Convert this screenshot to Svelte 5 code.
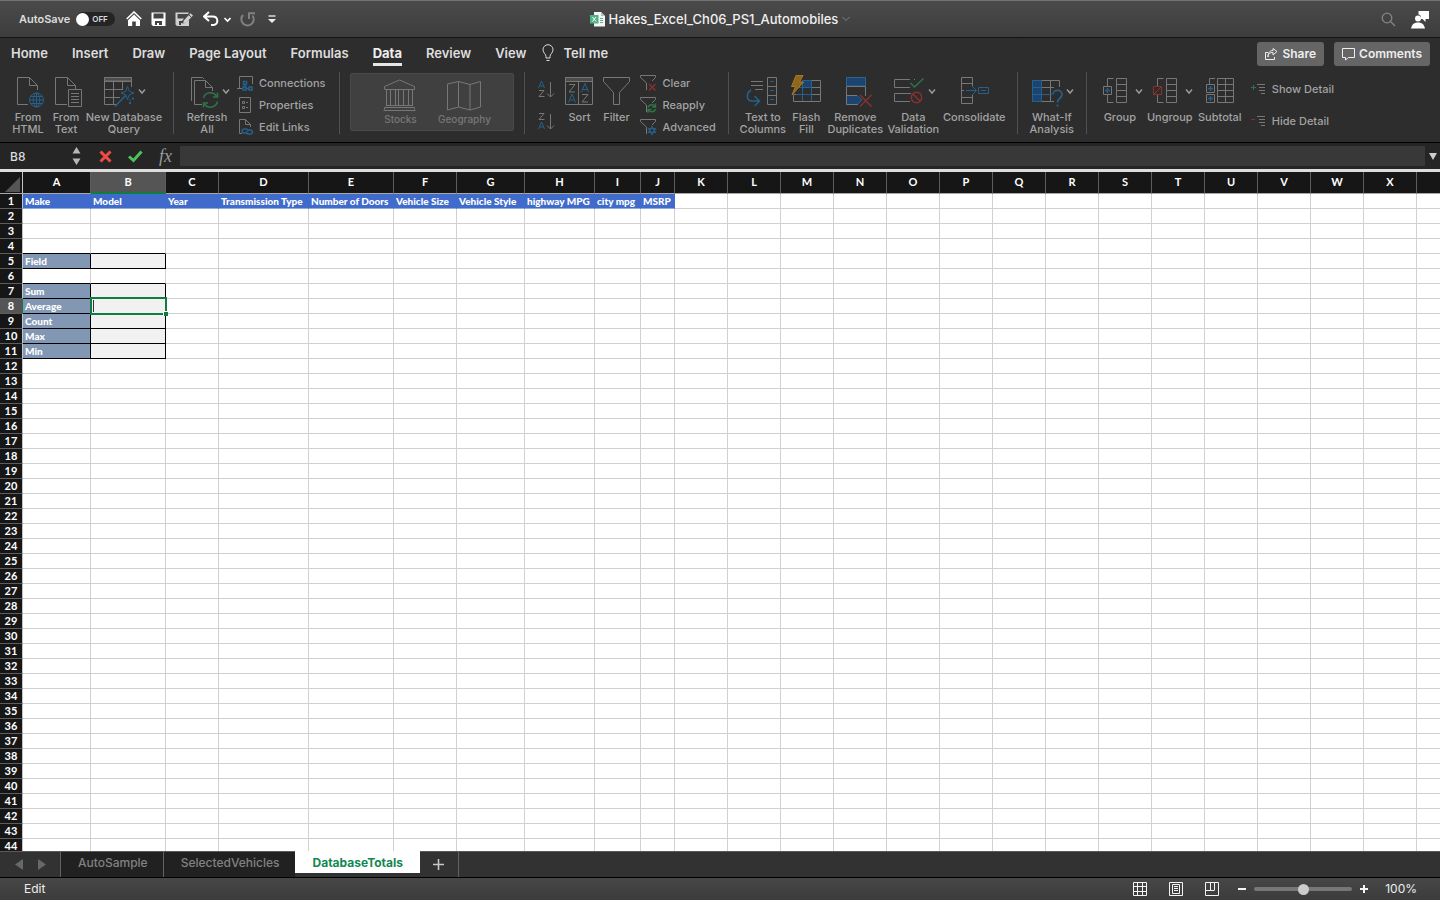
<script>
  const menu = ['Home', 'Insert', 'Draw', 'Page Layout', 'Formulas', 'Data', 'Review', 'View'];

  const columns = [
    ['A', 68], ['B', 75], ['C', 53], ['D', 90], ['E', 85], ['F', 63], ['G', 68], ['H', 70], ['I', 46], ['J', 34],
    ...'KLMNOPQRSTUVWX'.split('').map((c) => [c, 53]),
    ['', 53]
  ];
  const headings = ['Make', 'Model', 'Year', 'Transmission Type', 'Number of Doors', 'Vehicle Size', 'Vehicle Style', 'highway MPG', 'city mpg', 'MSRP'];
  const labels = { 5: 'Field', 7: 'Sum', 8: 'Average', 9: 'Count', 10: 'Max', 11: 'Min' };
  const rows = Array.from({ length: 44 }, (_, i) => i + 1);

  function text(row, col) {
    if (row === 1) return headings[col] ?? '';
    return col === 0 ? (labels[row] ?? '') : '';
  }
  function kind(row, col) {
    if (row === 1 && col < 10) return 'head';
    if (col > 1) return '';
    const line = row === 4 || row === 6 ? 'line' : '';
    if (!labels[row]) return line;
    return col === 0 ? 'label' : 'value';
  }
</script>

{#snippet tool(name, label, x, width)}
  <button class="tool" style:width="{width}px">
    <svg {width} height="39" viewBox="{x} 72 {width} 39" aria-hidden="true">
      {#if name === 'html'}
        <path d="M28 104.5H17.5V77.5H29.5L37.5 85.5V90M29.5 77.5V85.5H37.5" />
        <g class="blue"><circle cx="36.5" cy="100" r="7" /><ellipse cx="36.5" cy="100" rx="3.3" ry="7" /><path d="M36.5 93V107M29.5 100H43.5M31 96.5H42M31 103.5H42" /></g>
      {:else if name === 'text'}
        <path d="M67 104.5H55.5V77.5H67.5L75.5 85.5V89M67.5 77.5V85.5H75.5" />
        <path d="M68.5 89.5H81.5V106.5H68.5ZM71 93.5H79M71 96.5H79M71 99.5H79M71 102.5H79" />
      {:else if name === 'query'}
        <path class="band" d="M104.5 77.5H131.5V81H104.5Z" />
        <path d="M117 104.5H104.5V77.5H131.5V87M104.5 81.5H131.5M104.5 89.5H123M104.5 97.5H120M113.5 81.5V104.5M122.5 81.5V90" />
        <g class="blue"><path stroke-width="1.5" d="M115 106.5L125.5 95.5" /><path d="M127.5 86.5L129.3 91.3L134 93L129.3 94.8L127.5 99.5L125.8 94.8L121 93L125.8 91.3Z" /><path stroke-width="2" d="M132 98.500H134M129 103H131M130 99.500V100.500" /></g>
        <path class="chev" d="M139 89.500L142 93L145 89.500" />
      {:else if name === 'refresh'}
        <path d="M191.500 101V77.500H202.500L204 79M202 104.500H194.500V80.500H205.500L212.500 87.500V91M205.500 80.500V87.500H212.500" />
        <g class="green" stroke-width="1.500"><path d="M203.500 98A7.200 7.200 0 0 1 216.500 96M217.500 101.500A7.200 7.200 0 0 1 204.500 104" /><path d="M217.500 92.500V97H213M203.500 107.500V103H208" /></g>
        <path class="chev" d="M223 89.500L226 93L229 89.500" />
      {:else if name === 'sort'}
        <path class="band" d="M565.500 77.500H592.500V81.500H565.500Z" /><path d="M565.500 77.500H592.500V104.500H565.500ZM565.500 81.500H592.500M578.500 81.500V104.500" />
        <path d="M569 84.500H575L569 92H575M582 94.500H588L582 102H588" />
        <path class="blue" d="M568.500 102.500L572 94L575.500 102.500M569.500 100H574.500M581.500 92L585 83.500L588.500 92M582.500 89.500H587.500" />
      {:else if name === 'filter'}
        <path d="M603.500 77.500H629.500V81.500L619.500 92.500V104.500H613.500V92.500L603.500 81.500Z" />
      {:else if name === 'columns'}
        <path d="M751 81.500H763M751 85.500H763M755 89.500H763M767.500 77.500H776.500V104.500H767.500ZM767.500 86.500H776.500M767.500 95.500H776.500" />
        <path class="blue" d="M770 81.500H774M770 90.500H774M770 99.500H774" />
        <path class="blue" stroke-width="1.500" d="M751 90C746 93 746 101 752 101H759M754.500 96L759.500 101L754.500 106" />
      {:else if name === 'flash'}
        <path class="bluefill" d="M802.500 80.500H811.500V87.500H802.500Z" />
        <path d="M793.500 95V101.500H820.500V80.500H804M802.500 87.500H820.500M793.500 94.500H820.500M811.500 80.500V101.500" /><path class="blue" d="M802.500 101V80.500H811.500V101M796 87.500H812M796 94.500H812" />
        <path class="bolt" d="M796 75.500H803L799.500 82H803.500L792 95L795.500 86.500H791.500Z" />
      {:else if name === 'remove'}
        <path class="bluefill" d="M846.500 77.500H865.500V86H846.500ZM846.500 95.500H857L862 100L857 104.500H846.500Z" />
        <path d="M865.500 96V86.500H846.500V104.500H858M846.500 95.500H857" />
        <path class="red" stroke-width="1.500" d="M860 95L871.500 106.500M871.500 95L860 106.500" />
      {:else if name === 'validate'}
        <path d="M910 79.500H894.500V87.500H910M914 79.500H915M911 93.500H894.500V101.500H910" />
        <path class="green" stroke-width="1.500" d="M910.500 83L914.500 87L923.500 78.500" />
        <g class="red" stroke-width="1.500"><circle cx="916.500" cy="97.500" r="5.200" /><path d="M913 94L920 101" /></g>
        <path class="chev" d="M929 89.500L932 93L935 89.500" />
      {:else if name === 'consolidate'}
        <path d="M972.500 84V77.500H961.500V103.500H972.500V97.500H961.500M961.500 83.500H972.500M961.500 90.500H964M972.500 84V87M972.500 94V98" />
        <path class="blue" d="M966 90.500H976M972 86L976.500 90.500L972 95M978.500 87.500H988.500V93.500H978.500ZM981 90.500H986" />
      {:else if name === 'whatif'}
        <path class="bluefill" d="M1032.500 80.500H1041.500V101.500H1032.500Z" />
        <path d="M1041.500 80.500H1059.500V87M1041.500 87.500H1054M1041.500 94.500H1052M1041.500 101.500H1054M1050.500 80.500V101.500" /><path class="blue" d="M1032.500 80.500H1041.500V101.500H1032.500ZM1032.500 87.500H1041.500M1032.500 94.500H1052" />
        <path class="blue" stroke-width="1.700" d="M1053 94.500C1053 89 1062 89 1062 94.500C1062 98.500 1057.500 98 1057.500 102.500M1057.500 104.500V106.500" />
        <path class="chev" d="M1067 89.500L1070 93L1073 89.500" />
      {:else if name === 'group'}
        <path d="M1113.500 78.500H1107.500V86M1107.500 95V102.500H1113.500M1103.500 86.500H1111.500V94.500H1103.500ZM1116.500 78.500H1126.500V102.500H1116.500ZM1116.500 84.500H1126.500M1116.500 90.500H1126.500M1116.500 96.500H1126.500" />
        <path class="blue" stroke-width="1.500" d="M1105 90.500H1110M1107.500 88V93" />
        <path class="chev" d="M1136 89.500L1139 93L1142 89.500" />
      {:else if name === 'ungroup'}
        <path d="M1163.500 78.500H1157.500V86M1157.500 95V102.500H1163.500M1166.500 78.500H1176.500V102.500H1166.500ZM1166.500 84.500H1176.500M1166.500 90.500H1176.500M1166.500 96.500H1176.500" />
        <path class="red" d="M1153.500 86.500H1161.500V94.500H1153.500ZM1153.500 94.500L1161.500 86.500" />
        <path class="chev" d="M1186 89.500L1189 93L1192 89.500" />
      {:else if name === 'subtotal'}
        <path d="M1215 78.500H1209.500V84M1206.500 84.500H1214.500V92.500H1206.500ZM1206.500 94.500H1214.500V102.500H1206.500ZM1217.500 78.500H1233.500V102.500H1217.500ZM1217.500 84.500H1233.500M1217.500 90.500H1233.500M1217.500 96.500H1233.500M1225.500 78.500V102.500" />
        <path class="blue" stroke-width="1.500" d="M1208 88.500H1213M1210.500 86V91M1208 98.500H1213M1210.500 96V101" />
      {/if}
    </svg>
    {#each label as line}<span>{line}</span>{/each}
  </button>
{/snippet}

{#snippet small(name, label)}
  <button class="small">
    <svg width="17" height="16" viewBox="0 0 17 16" aria-hidden="true">
      {#if name === 'connections'}
        <path d="M0 13.500H5M2.500 13V1.500H15.500V9" /><path class="blue" stroke-width="1.500" d="M6.500 6.500H9.500V9.500H6.500ZM6 12H9V15H6ZM12 12H15V15H12ZM8 9.500V12M9 13.500H12" />
      {:else if name === 'properties'}
        <path d="M2.500 .500H13.500V15.500H2.500ZM5.500 4.500H7.500V6.500H5.500ZM5.500 9.500H7.500V11.500H5.500ZM9 5.500H11M9 10.500H11" />
      {:else if name === 'links'}
        <path d="M5 14.500H2.500V.500H8.500L13.500 5.500V8M8.500 .500V5.500H13.500" /><path class="blue" stroke-width="1.500" d="M9 14H7C4.500 14 4.500 10 7 10H9.500C11 10 11.500 12 10.500 12.500M11 11H13.500C16 11 16 15 13.500 15H11C9.500 15 9 13 10 12.500" />
      {:else if name === 'show' || name === 'hide'}
        <path d="M7 3.500H15M9 6.500H15M9 9.500H15M11 12.500H15" />
        {#if name === 'show'}<path class="green" d="M1 6.500H6M3.500 4V9" />{:else}<path class="red" d="M1 6.500H5" />{/if}
      {:else}
        <path d="M6.500 15L6.500 8L.500 2.500V.500H15.500V2.500L12 6" />
        {#if name === 'clear'}<path class="red" stroke-width="1.400" d="M9 9L15.500 15.500M15.500 9L9 15.500" />
        {:else if name === 'reapply'}<path class="green" stroke-width="1.400" d="M8 10.500C9 7 13.500 7 15 9.500M15.500 6.500V10H12M15.500 12C14.500 15.500 10 15.500 8.500 13M8 16V12.500H11.500" />
        {:else}<g class="blue" stroke-width="1.500"><circle cx="12" cy="11.500" r="2.200" /><path d="M12 7V9.500M12 13.500V16M8 9.500L10 10.500M14 12.500L16 13.500M8 13.500L10 12.500M14 10.500L16 9.500" /></g>{/if}
      {/if}
    </svg>
    {label}
  </button>
{/snippet}

{#snippet order(down)}
  <button class="order" aria-label={down ? 'Sort descending' : 'Sort ascending'}>
    <svg width="20" height="18" viewBox="0 0 20 18" aria-hidden="true">
      <path class="blue" d={down ? 'M2.500 17L5.500 10L8.500 17M3.500 15H7.500' : 'M2.500 8L5.500 1L8.500 8M3.500 6H7.500'} />
      <path d={down ? 'M3 1.500H8L3 7.500H8.500' : 'M3 10.500H8L3 16.500H8.500'} />
      <path d="M14.500 2V17M11 13.500L14.500 17L18 13.500" />
    </svg>
  </button>
{/snippet}

<main>
  <header class="title">
    <div class="quick">
      <label class="auto">AutoSave <input type="checkbox" role="switch" /><span class="switch">OFF</span></label>
      <button aria-label="Start">
        <svg width="16" height="16" viewBox="0 0 16 16"><path d="M.700 8L8 1L15.300 8" fill="none" stroke="#fff" stroke-width="1.600" /><path fill="#fff" d="M2 9.200L8 3.600L14 9.200V15H9.800V10.500H6.200V15H2Z" /></svg>
      </button>
      <button aria-label="Save">
        <svg width="15" height="16" viewBox="0 0 15 16"><path fill="#fff" fill-rule="evenodd" d="M.500 1.500H14.500V15H2L.500 13.500ZM2.500 2.500V7.500H12.500V2.500ZM4 10V14H6V12H8V14H11V10Z" /></svg>
      </button>
      <button aria-label="Save as">
        <svg width="19" height="16" viewBox="0 0 19 16"><path fill="#d0d0d0" fill-rule="evenodd" d="M.500 1.500H14L13 3H2.500V7.500H9L7 10H4V14H6V12L9 12.500L14 9V15H2L.500 13.500Z" /><path fill="#d0d0d0" d="M8 12.500L9 9.200L15.500 2.200L18 4.500L11.500 11.500Z" /><path stroke="#444" d="M14 4L16.500 6.300" /></svg>
      </button>
      <button aria-label="Undo">
        <svg width="28" height="16" viewBox="0 0 28 16" fill="none" stroke="#fff" stroke-width="2"><path d="M6 1L1 5.500L6 10M1.500 5.500H9.500C16 5.500 15.500 14 10.500 14H8" /><path stroke-width="1.600" d="M21.500 7L24.500 10L27.500 7" /></svg>
      </button>
      <button aria-label="Redo">
        <svg width="16" height="16" viewBox="0 0 16 16" fill="none" stroke="#808080" stroke-width="2"><path d="M3 4A6.200 6.200 0 1 0 12.500 4.500M9 8V2.200H15" /></svg>
      </button>
      <button class="more" aria-label="Customize toolbar">
        <svg width="8" height="16" viewBox="0 0 8 16"><path d="M.500 5H7.500" stroke="#ddd" stroke-width="1.500" /><path fill="#eee" d="M0 8H8L4 12Z" /></svg>
      </button>
    </div>
    <h1>
      <svg width="15" height="15" viewBox="0 0 15 15"><path fill="#f4f4f4" d="M4 0H11L15 4V14.500H4Z" /><path fill="#bbb" d="M11 0V4H15Z" /><path stroke="#58b58a" d="M10 6.500H13M10 8.500H13M10 10.500H13" /><path fill="#4fb384" d="M0 3H8.500V11.500H0Z" /><path stroke="#fff" d="M2.500 5L6 9.500M6 5L2.500 9.500" /></svg>
      Hakes_Excel_Ch06_PS1_Automobiles
      <svg width="8" height="6" viewBox="0 0 8 6"><path d="M.500 1L4 4.500L7.500 1" fill="none" stroke="#808080" /></svg>
    </h1>
    <div class="right">
      <button aria-label="Search"><svg width="15" height="15" viewBox="0 0 15 15" fill="none" stroke="#858585" stroke-width="1.300"><circle cx="6" cy="6" r="4.800" /><path d="M9.500 9.500L14 14" /></svg></button>
      <button aria-label="Account"><svg width="19" height="19" viewBox="0 0 19 19" fill="#fff"><path d="M7.500 1H18V9H14.500V12L11.500 9H10C10.500 6 9 4.500 7.500 4.500Z" /><circle cx="7" cy="8.500" r="3" /><path d="M0 18.500C1 14 3.500 12.500 7 12.500C10.500 12.500 13 14 14 18.500Z" /></svg></button>
    </div>
  </header>

  <nav class="menu">
    {#each menu as item}<button class:active={item === 'Data'}>{item}</button>{/each}
    <button class="tell"><svg width="12" height="18" viewBox="0 0 12 18" fill="none" stroke="#ddd"><path d="M4 12.500C4 10 1 9 1 5.700A5 5 0 0 1 11 5.700C11 9 8 10 8 12.500V14H4ZM4.500 16.500H7.500" /></svg>Tell me</button>
    <div class="actions">
      <button class="pill"><svg width="13" height="12" viewBox="0 0 13 12" fill="none" stroke="#eee"><path d="M3 4.500H.500V11.500H9.500V9M3 9C3 5.500 5 4.500 8 4.500V7L12 3.500L8 .500V2.500C4.500 2.500 3 5 3 9Z" /></svg>Share</button>
      <button class="pill"><svg width="13" height="13" viewBox="0 0 13 13" fill="none" stroke="#eee"><path d="M.500 .500H12.500V9.500H6.500L3.500 12V9.500H.500Z" /></svg>Comments</button>
    </div>
  </nav>

  <section class="ribbon">
    <div class="group first">
      {@render tool('html', ['From', 'HTML'], 9, 38)}
      {@render tool('text', ['From', 'Text'], 47, 38)}
      {@render tool('query', ['New Database', 'Query'], 85, 78)}
    </div>
    <div class="group">
      {@render tool('refresh', ['Refresh', 'All'], 184, 46)}
      <div class="list">
        {@render small('connections', 'Connections')}
        {@render small('properties', 'Properties')}
        {@render small('links', 'Edit Links')}
      </div>
    </div>
    <div class="group types">
      <div class="gallery">
        <button><svg width="34" height="34" viewBox="383 77 34 34"><path d="M384.500 88V85.500L399.500 79L414.500 85.500V88.500H384.500M386.500 89V104M390.500 89V104M395.500 89V104M398.500 89V104M403.500 89V104M408.500 89V104M412.500 89V104M386 104.500H413M384.500 108.500V106.500H414.500V108.500M383.500 109.500H415.500" /></svg>Stocks</button>
        <button><svg width="34" height="34" viewBox="447 77 34 34"><path d="M447.500 83L458.500 80.500L470 83.500L480.500 80.500V106L470 109L458.500 106L447.500 109ZM458.500 80.500V106M470 83.500V109" /></svg>Geography</button>
      </div>
    </div>
    <div class="group filters">
      <div class="orders">{@render order(false)}{@render order(true)}</div>
      {@render tool('sort', ['Sort'], 560, 38)}
      {@render tool('filter', ['Filter'], 598, 36)}
      <div class="list">
        {@render small('clear', 'Clear')}
        {@render small('reapply', 'Reapply')}
        {@render small('advanced', 'Advanced')}
      </div>
    </div>
    <div class="group">
      {@render tool('columns', ['Text to', 'Columns'], 739, 48)}
      {@render tool('flash', ['Flash', 'Fill'], 787, 39)}
      {@render tool('remove', ['Remove', 'Duplicates'], 826, 59)}
      {@render tool('validate', ['Data', 'Validation'], 885, 57)}
      {@render tool('consolidate', ['Consolidate'], 942, 65)}
    </div>
    <div class="group">
      {@render tool('whatif', ['What-If', 'Analysis'], 1028, 48)}
    </div>
    <div class="group last">
      {@render tool('group', ['Group'], 1097, 46)}
      {@render tool('ungroup', ['Ungroup'], 1143, 54)}
      {@render tool('subtotal', ['Subtotal'], 1197, 46)}
      <div class="list detail">
        {@render small('show', 'Show Detail')}
        {@render small('hide', 'Hide Detail')}
      </div>
    </div>
  </section>

  <section class="formula">
    <input class="name" aria-label="Name box" value="B8" />
    <svg class="step" width="9" height="20" viewBox="0 0 9 20" fill="#b8b8b8"><path d="M.500 7.500L4.500 1L8.500 7.500ZM.500 12.500L4.500 19L8.500 12.500Z" /></svg>
    <div class="edit">
      <button aria-label="Cancel"><svg width="13" height="13" viewBox="0 0 13 13" stroke="#ef4b45" stroke-width="3"><path d="M1.500 1.500L11.500 11.500M11.500 1.500L1.500 11.500" /></svg></button>
      <button aria-label="Enter"><svg width="15" height="13" viewBox="0 0 15 13" stroke="#4fc15a" stroke-width="3" fill="none"><path d="M1 6.500L5.500 10.500L13.500 1.500" /></svg></button>
      <button class="fx">fx</button>
    </div>
    <input class="entry" aria-label="Formula" />
    <button class="expand" aria-label="Expand formula bar"><svg width="8" height="7" viewBox="0 0 8 7"><path fill="#ccc" d="M0 0H8L4 7Z" /></svg></button>
  </section>

  <section class="sheet">
    <table>
      <colgroup>
        <col style:width="23px" />
        {#each columns as [, width]}<col style:width="{width}px" />{/each}
      </colgroup>
      <thead>
        <tr>
          <th class="corner"><svg width="16" height="16" viewBox="0 0 16 16"><path fill="#555" d="M15 0V15H0Z" /></svg></th>
          {#each columns as [letter]}<th class:on={letter === 'B'}>{letter}</th>{/each}
        </tr>
      </thead>
      <tbody>
        {#each rows as row}
          <tr>
            <th class:on={row === 8}>{row}</th>
            {#each columns as _, col}
              <td class={kind(row, col)}>
                {#if row === 8 && col === 1}
                  <div class="selection"><input aria-label="Cell B8" /><i class="caret"></i><i class="handle"></i></div>
                {:else}{text(row, col)}{/if}
              </td>
            {/each}
          </tr>
        {/each}
      </tbody>
    </table>
  </section>

  <nav class="sheets">
    <div class="arrows">
      <button aria-label="Previous sheet"><svg width="8" height="12" viewBox="0 0 8 12"><path fill="#686868" d="M8 0V11L0 5.500Z" /></svg></button>
      <button aria-label="Next sheet"><svg width="8" height="12" viewBox="0 0 8 12"><path fill="#686868" d="M0 0V11L8 5.500Z" /></svg></button>
    </div>
    <button class="tab">AutoSample</button>
    <button class="tab">SelectedVehicles</button>
    <button class="tab current">DatabaseTotals</button>
    <button class="add" aria-label="Add sheet"><svg width="11" height="11" viewBox="0 0 11 11" stroke="#c8c8c8" stroke-width="1.600"><path d="M5.500 0V11M0 5.500H11" /></svg></button>
  </nav>

  <footer>
    <span class="mode">Edit</span>
    <div class="views">
      <button aria-label="Normal view"><svg width="14" height="14" viewBox="0 0 14 14"><path d="M.500 .500H13.500V13.500H.500ZM.500 4.500H13.500M.500 9.500H13.500M4.500 .500V13.500M9.500 .500V13.500" /></svg></button>
      <button aria-label="Page layout view"><svg width="14" height="14" viewBox="0 0 14 14"><path d="M.500 .500H13.500V13.500H.500ZM3.500 2.500H10.500V11.500H3.500ZM5 4.500H9M5 6.500H9M5 8.500H9" /></svg></button>
      <button aria-label="Page break view"><svg width="14" height="14" viewBox="0 0 14 14"><path d="M.500 .500H13.500V13.500H.500ZM5.500 .500V8M9.500 .500V8M.500 8.500H9.500" /></svg></button>
    </div>
    <div class="zoom">
      <button aria-label="Zoom out"><svg width="8" height="8" viewBox="0 0 8 8" stroke-width="2"><path d="M0 4H8" /></svg></button>
      <input type="range" min="0" max="200" value="100" aria-label="Zoom" />
      <button aria-label="Zoom in"><svg width="8" height="8" viewBox="0 0 8 8" stroke-width="2"><path d="M0 4H8M4 0V8" /></svg></button>
    </div>
    <span class="percent">100%</span>
  </footer>
</main>

<style>
  :global(body) { margin: 0; }
  * { box-sizing: border-box; }
  main { height: 100vh; display: flex; flex-direction: column; overflow: hidden; background: #2d2d2d; color: #ddd; font: 500 11px/12px Inter, "Liberation Sans", sans-serif; }
  button, input { font: inherit; color: inherit; background: none; border: 0; padding: 0; margin: 0; outline: none; }
  svg { display: block; flex: none; }

  .title { flex: none; height: 38px; display: grid; grid-template-columns: 1fr auto 1fr; align-items: center; background: linear-gradient(#4a4a4a, #3d3d3d); border-top: 1px solid #717171; border-bottom: 1px solid #141414; }
  .quick { display: flex; align-items: center; gap: 9px; padding-left: 19px; }
  .auto { display: flex; align-items: center; gap: 6px; position: relative; padding-right: 2px; font-weight: 600; }
  .auto input { position: absolute; opacity: 0; }
  .switch { display: flex; align-items: center; width: 39px; height: 14px; border-radius: 7px; background: #242424; font-size: 8px; font-weight: 600; gap: 3px; }
  .switch::before { content: ""; width: 13px; height: 13px; border-radius: 50%; background: #fff; }
  .more { padding-left: 3px; }
  h1 { display: flex; align-items: center; gap: 4px; margin: 0; font-size: 13px; font-weight: 500; line-height: 16px; color: #f0f0f0; }
  .right { display: flex; justify-content: flex-end; align-items: center; gap: 15px; padding-right: 10px; }

  .menu { flex: none; height: 32px; display: flex; align-items: center; gap: 24px; padding: 0 10px 0 11px; font-size: 13px; line-height: 16px; font-weight: 600; }
  .menu > button { height: 24px; padding-bottom: 2px; border-bottom: 3px solid transparent; border-top: 3px solid transparent; }
  .menu > .active { border-bottom-color: #e6e6e6; font-weight: 700; color: #eee; }
  .menu > .tell { display: flex; align-items: center; gap: 9px; margin-left: -8px; }
  .actions { display: flex; gap: 10px; margin-left: auto; }
  .pill { display: flex; align-items: center; gap: 4px; height: 24px; padding: 0 8px; border-radius: 3px; background: #656565; color: #eee; font-size: 12px; }

  .ribbon { flex: none; height: 73px; padding-top: 2px; display: flex; align-items: flex-start; color: #a3a3a3; border-bottom: 1px solid #000; }
  .ribbon svg { fill: none; stroke: #777; }
  .ribbon .chev { stroke: #999; stroke-width: 1.5; }
  .blue { stroke: #25618a; }
  .green { stroke: #2f7448; }
  .red { stroke: #8a3030; }
  .bluefill { fill: #1d4470; stroke: #2b6591; }
  .band { fill: #4c4c4c; }
  .bolt { fill: #8f671c; stroke: #a87a24; }
  .group { display: flex; flex: none; height: 62px; padding: 0 10px; border-right: 1px solid #505050; }
  .first { padding-left: 9px; }
  .last { border-right: 0; }
  .tool { flex: none; height: 66px; display: flex; flex-direction: column; align-items: center; justify-content: flex-start; white-space: nowrap; }
  .list { display: flex; flex-direction: column; margin-left: 7px; padding-right: 4px; }
  .small { flex: none; display: flex; align-items: center; gap: 5px; height: 22px; white-space: nowrap; }
  .types { padding: 1px 10px 0; }
  .gallery { display: flex; align-items: flex-start; height: 58px; width: 164px; padding: 4px 17px 0; background: #404040; border: 1px solid #494949; border-radius: 2px; color: #777; font-size: 10px; }
  .gallery button { width: 64px; display: flex; flex-direction: column; align-items: center; gap: 1px; }
  .filters { padding-right: 9px; }
  .orders { display: flex; flex-direction: column; gap: 14px; padding: 8px 4px 0 1px; }
  .filters .list { margin-left: 6px; padding-right: 3px; }
  .detail { gap: 10px; padding-top: 6px; }

  .formula { flex: none; height: 29px; display: flex; align-items: center; background: #252525; border-bottom: 3px solid #ddd; }
  .name { width: 60px; padding-left: 10px; margin-right: 12px; font-size: 12px; }
  .edit { display: flex; align-items: center; gap: 16px; margin: 0 8px 0 18px; }
  .fx { font: italic 18px/20px "Liberation Serif", serif; color: #999; }
  .entry { flex: 1; height: 20px; background: #383838; }
  .expand { padding: 0 3px 0 4px; }

  .sheet { flex: 1; min-height: 0; overflow: hidden; background: #fff; font: 900 10px/14px Lato, sans-serif; }
  table { table-layout: fixed; width: 0; border-collapse: separate; border-spacing: 0; }
  th { padding: 0; color: #fff; background: #161616; border-right: 1px solid #5d5d5d; border-bottom: 1px solid #a9a9a9; font-weight: 700; font-size: 11px; text-align: center; }
  thead th { height: 22px; padding-bottom: 2px; }
  thead .on { background: #555; border-bottom: 2px solid #107c41; padding-bottom: 1px; }
  thead .corner { padding: 4px 0 0 5px; border-right-color: #c4c4c4; }
  tbody th { height: 15px; border-right-color: #c4c4c4; border-bottom-color: #5d5d5d; line-height: 14px; }
  tbody .on { background: #555; border-right-color: #107c41; }
  td { height: 15px; padding: 0 0 0 2px; border-right: 1px solid #d0d0d0; border-bottom: 1px solid #d0d0d0; color: #fff; white-space: nowrap; }
  .head { background: #416bcb; border-right-color: #416bcb; border-bottom-color: #8ea9e0; }
  .line { border-bottom-color: #000; }
  .label { background: #8297b4; border-color: #000; }
  .value { background: #f1f1f1; border-color: #000; position: relative; }
  .selection { position: absolute; inset: -2px -2px -2px -1px; z-index: 1; border: 2px solid #107c41; }
  .selection input { display: block; width: 100%; height: 100%; color: #000; }
  .caret { position: absolute; left: 1px; top: 1px; bottom: 1px; width: 1px; background: #333; }
  .handle { position: absolute; right: -3px; bottom: -3px; width: 5px; height: 5px; background: #107c41; border-left: 1px solid #fff; border-top: 1px solid #fff; }

  .sheets { flex: none; height: 26px; display: flex; background: #323232; border-top: 1px solid #5a5a5a; font-size: 12px; line-height: 16px; }
  .arrows { display: flex; align-items: center; gap: 15px; width: 60px; padding-left: 15px; }
  .tab { padding: 0 15px 3px 17px; background: #212121; border-left: 1px solid #626262; color: #828282; }
  .current { background: #fff; color: #118752; font-weight: 700; margin: -1px 0 4px; padding: 2px 17px 0 18px; border: 0; }
  .add { width: 39px; display: grid; place-items: center; border-right: 1px solid #626262; }

  footer { flex: none; height: 23px; display: flex; align-items: center; padding: 0 23px 0 24px; border-top: 1px solid #000; background: linear-gradient(#474747, #3c3c3c); font-size: 12px; line-height: 16px; font-weight: 400; color: #eee; }
  footer svg { fill: none; stroke: #f4f4f4; }
  .mode { margin-right: auto; }
  .views { display: flex; gap: 22px; margin-right: 19px; }
  .zoom { display: flex; align-items: center; gap: 8px; margin-right: 17px; }
  .zoom input { appearance: none; width: 98px; height: 4px; border-radius: 2px; background: #777; }
  .zoom input::-webkit-slider-thumb { appearance: none; width: 11px; height: 11px; border-radius: 50%; background: #ccc; }
</style>
